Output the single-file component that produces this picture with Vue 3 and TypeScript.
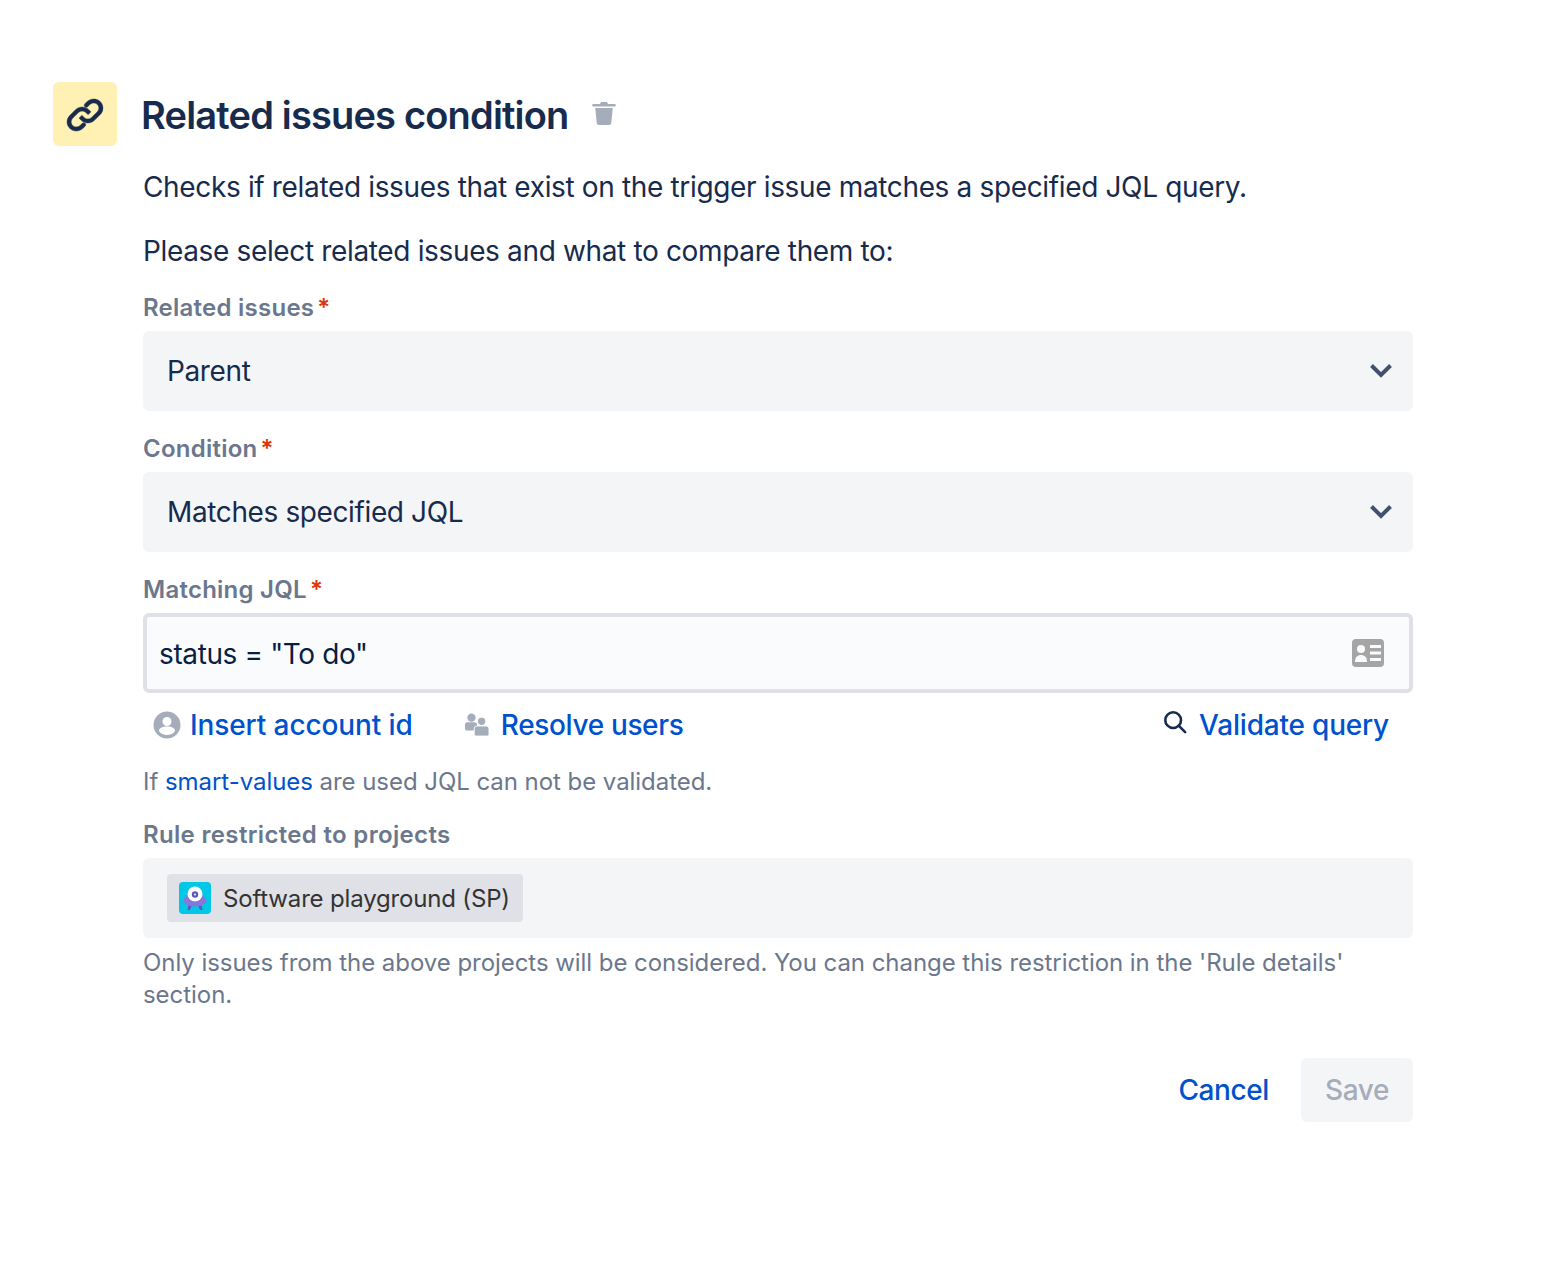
<script setup lang="ts">
const linkPath = 'M12.856 5.457l-.937.92a1.002 1.002 0 000 1.437 1.047 1.047 0 001.463 0l.984-.966c.967-.95 2.542-1.135 3.602-.288a2.54 2.54 0 01.203 3.81l-2.903 2.852a2.646 2.646 0 01-3.696 0l-1.11-1.09L9 13.57l1.108 1.089c1.822 1.788 4.802 1.788 6.622 0l2.905-2.852a4.558 4.558 0 00-.357-6.82c-1.893-1.517-4.695-1.226-6.422.47zm-1.712 13.086l.937-.92a1.002 1.002 0 000-1.437 1.047 1.047 0 00-1.463 0l-.984.966c-.967.95-2.542 1.135-3.602.288a2.54 2.54 0 01-.203-3.81l2.903-2.852a2.646 2.646 0 013.696 0l1.11 1.09L15 10.43l-1.108-1.089c-1.822-1.788-4.802-1.788-6.622 0l-2.905 2.852a4.558 4.558 0 00.357 6.82c1.893 1.517 4.695 1.226 6.422-.47z'
</script>

<template>
  <main class="page">
    <header class="head">
      <div class="head-icon">
        <svg width="48" height="48" viewBox="0 0 24 24"><path :d="linkPath" fill="#172b4d" stroke="#172b4d" stroke-width="0.2" /></svg>
      </div>
      <h1>Related issues condition</h1>
      <svg class="trash" width="24" height="26" viewBox="0 0 24 26">
        <path d="M9 2h6l1 2h6.500a1.300 1.300 0 010 2.600H1.500A1.300 1.300 0 011.500 4H8z" fill="#a5adba" />
        <path d="M3.200 8h17.600l-1.600 15.200a2 2 0 01-2 1.800H6.800a2 2 0 01-2-1.800z" fill="#a5adba" />
      </svg>
    </header>

    <section class="body">
      <p class="intro first">Checks if related issues that exist on the trigger issue matches a specified JQL query.</p>
      <p class="intro second">Please select related issues and what to compare them to:</p>

      <label class="lbl">Related issues<span class="req">*</span></label>
      <div class="select">
        <span>Parent</span>
        <svg width="32" height="32" viewBox="0 0 32 32"><path d="M6.500 10.500l9.500 9.500 9.500-9.500" fill="none" stroke="#42526e" stroke-width="4" /></svg>
      </div>

      <label class="lbl gap">Condition<span class="req">*</span></label>
      <div class="select">
        <span>Matches specified JQL</span>
        <svg width="32" height="32" viewBox="0 0 32 32"><path d="M6.500 10.500l9.500 9.500 9.500-9.500" fill="none" stroke="#42526e" stroke-width="4" /></svg>
      </div>

      <label class="lbl gap">Matching JQL<span class="req">*</span></label>
      <div class="jql">
        <span>status = "To do"</span>
        <svg width="32" height="28" viewBox="0 0 32 28">
          <rect width="32" height="28" rx="4" fill="#a5a5a5" />
          <circle cx="9" cy="10" r="4" fill="#fafbfc" />
          <path d="M3 23c0-5 2.500-7 6-7s6 2 6 7z" fill="#fafbfc" />
          <path d="M18 6h11v3H18zM18 12.500h11v3H18zM18 19h11v3H18z" fill="#fafbfc" />
        </svg>
      </div>

      <div class="actions">
        <a class="action account">
          <svg width="28" height="28" viewBox="0 0 28 28">
            <circle cx="14" cy="14" r="13.500" fill="#a5adba" />
            <circle cx="14" cy="10.500" r="4.500" fill="#fff" />
            <path d="M6 20c0-3 3-4.500 8-4.500S22 17 22 20c-1.500 2.500-4.500 4-8 4s-6.500-1.500-8-4z" fill="#fff" />
          </svg>
          Insert account id
        </a>
        <a class="action users">
          <svg width="24" height="24" viewBox="0 0 26 26">
            <circle cx="7" cy="5" r="4.500" fill="#a5adba" />
            <path d="M0 13a3 3 0 013-3h7a3 3 0 013 3v6H2a2 2 0 01-2-2z" fill="#a5adba" />
            <circle cx="18" cy="9" r="4.500" fill="#a5adba" stroke="#fff" stroke-width="1" />
            <path d="M10 17a3 3 0 013-3h10a3 3 0 013 3v6a2 2 0 01-2 2H12a2 2 0 01-2-2z" fill="#a5adba" stroke="#fff" stroke-width="1" />
          </svg>
          Resolve users
        </a>
        <a class="action validate">
          <svg width="24" height="24" viewBox="0 0 26 26">
            <circle cx="11" cy="11" r="8.500" fill="none" stroke="#172b4d" stroke-width="2.800" />
            <path d="M17 17l7 7" stroke="#172b4d" stroke-width="2.800" stroke-linecap="round" />
          </svg>
          Validate query
        </a>
      </div>

      <p class="help smart">If <a>smart-values</a> are used JQL can not be validated.</p>

      <label class="lbl rule">Rule restricted to projects</label>
      <div class="projects">
        <span class="tag">
          <svg width="32" height="32" viewBox="0 0 32 32">
            <rect width="32" height="32" rx="4" fill="#00c7e6" />
            <path d="M9.500 23l-1 5h2.500l1.500-4zM22.500 23l1 5H21l-1.500-4z" fill="#6554c0" />
            <ellipse cx="16" cy="18.500" rx="11.500" ry="6" fill="#8777d9" />
            <circle cx="16" cy="12" r="7.500" fill="#fff" />
            <path d="M9 15a7.500 7.500 0 0014 0c1.500 1 1.500 3 0 4-4 1.500-10 1.500-14 0-1.500-1-1.500-3 0-4z" fill="#8777d9" />
            <circle cx="16" cy="12.500" r="3.200" fill="#6554c0" />
            <circle cx="16" cy="12.500" r="1" fill="#fff" />
          </svg>
          Software playground (SP)
        </span>
      </div>
      <p class="help note">Only issues from the above projects will be considered. You can change this restriction in the 'Rule details' section.</p>

      <footer class="foot">
        <button class="cancel" type="button">Cancel</button>
        <button class="save" type="button" disabled>Save</button>
      </footer>
    </section>
  </main>
</template>

<style scoped>
.page {
  box-sizing: border-box;
  width: 1548px;
  height: 1270px;
  padding: 82px 135px 0 53px;
  font-family: Inter, "Liberation Sans", sans-serif;
  color: #172b4d;
  background: #fff;
}

.head {
  display: flex;
  align-items: center;
  height: 64px;
}

.head-icon {
  display: flex;
  align-items: center;
  justify-content: center;
  width: 64px;
  height: 64px;
  border-radius: 6px;
  background: #fff0b3;
}

.head-icon svg {
  margin-top: 2px;
}

h1 {
  margin: 2px 24px 0 24px;
  font-size: 38px;
  font-weight: 600;
  letter-spacing: -0.82px;
}

.trash {
  margin-top: -2px;
}

.body {
  padding-left: 90px;
}

.intro {
  margin: 0;
  font-size: 28px;
  line-height: 40px;
  letter-spacing: -0.35px;
}

.first {
  margin-top: 21px;
}

.second {
  margin-top: 24px;
}

.lbl {
  display: block;
  font-size: 24px;
  line-height: 32px;
  font-weight: 600;
  letter-spacing: 0.25px;
  color: #6b778c;
}

.second + .lbl {
  margin-top: 21px;
}

.lbl.gap {
  margin-top: 22px;
}

.lbl.rule {
  margin-top: 21px;
  letter-spacing: 0.33px;
}

.req {
  margin-left: 3px;
  color: #de350b;
}

.select {
  display: flex;
  align-items: center;
  justify-content: space-between;
  height: 80px;
  margin-top: 7px;
  padding: 0 16px 0 24px;
  border-radius: 6px;
  font-size: 28px;
  letter-spacing: -0.38px;
  background: #f4f5f7;
}

.jql {
  box-sizing: border-box;
  display: flex;
  align-items: center;
  justify-content: space-between;
  height: 80px;
  margin-top: 7px;
  padding: 2px 25px 0 12px;
  border: 4px solid #dfe1e6;
  border-radius: 6px;
  font-size: 28px;
  letter-spacing: -0.38px;
  color: #091e42;
  background: #fafbfc;
}

.jql svg {
  margin-top: -2px;
}

.actions {
  display: flex;
  align-items: center;
  height: 64px;
  padding-left: 10px;
  padding-right: 24px;
}

.action {
  display: flex;
  align-items: center;
  gap: 9px;
  font-size: 28px;
  font-weight: 500;
  letter-spacing: -0.1px;
  color: #0052cc;
}

.users {
  gap: 12px;
  margin-left: 52px;
  letter-spacing: -0.35px;
}

.validate {
  gap: 12px;
  margin-left: auto;
  letter-spacing: -0.2px;
}

.validate svg {
  margin-top: -6px;
}

.help {
  margin: 0;
  font-size: 24px;
  line-height: 32px;
  letter-spacing: -0.05px;
  color: #6b778c;
}

.help a {
  color: #0052cc;
}

.smart {
  margin-top: 9px;
}

.projects {
  display: flex;
  align-items: center;
  height: 80px;
  margin-top: 7px;
  padding-left: 24px;
  border-radius: 6px;
  background: #f4f5f7;
}

.tag {
  display: flex;
  align-items: center;
  gap: 12px;
  height: 48px;
  padding: 0 13px 0 12px;
  border-radius: 4px;
  font-size: 24px;
  letter-spacing: -0.17px;
  color: #333;
  background: #dfe1e6;
}

.note {
  margin-top: 9px;
}

.foot {
  display: flex;
  justify-content: flex-end;
  gap: 8px;
  margin-top: 47px;
}

button {
  height: 64px;
  padding: 0 24px;
  border: 0;
  border-radius: 6px;
  font-family: inherit;
  font-size: 28px;
  font-weight: 500;
  letter-spacing: -0.4px;
}

.cancel {
  color: #0052cc;
  background: transparent;
}

.save {
  color: #a5adba;
  background: #f4f5f7;
}
</style>

<style>
html, body {
  margin: 0;
  background: #fff;
}
</style>
